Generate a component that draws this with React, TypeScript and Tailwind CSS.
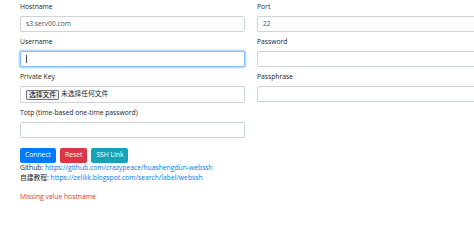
import React from "react";

const font = { fontFamily: '"Open Sans", "Noto Sans CJK SC", sans-serif' };

function Label({ children }: { children: React.ReactNode }) {
  return <div className="text-[6.75px] leading-[10px] text-[#212529] mb-[4px]">{children}</div>;
}

function Input({ value, focused }: { value?: string; focused?: boolean }) {
  return (
    <div
      className={
        "h-[16px] rounded-[2px] border bg-white flex items-center px-[5px] text-[6.75px] text-[#495057] " +
        (focused
          ? "border-[#80bdff] shadow-[0_0_0_1.5px_rgba(0,123,255,0.25)]"
          : "border-[#ced4da]")
      }
    >
      {focused ? <span className="w-px h-[8px] bg-[#495057]" /> : value}
    </div>
  );
}

export default function App() {
  return (
    <div className="w-[474px] h-[246px] bg-white overflow-hidden" style={font}>
      <div className="pl-[20px] pt-[2px]">
        <div className="grid grid-cols-[225px_225px] gap-x-[12px]">
          <div className="mb-[5px]">
            <Label>Hostname</Label>
            <Input value="s3.serv00.com" />
          </div>
          <div className="mb-[5px]">
            <Label>Port</Label>
            <Input value="22" />
          </div>
          <div className="mb-[5px]">
            <Label>Username</Label>
            <Input focused />
          </div>
          <div className="mb-[5px]">
            <Label>Password</Label>
            <Input />
          </div>
          <div className="mb-[5px]">
            <Label>Private Key</Label>
            <div className="h-[17px] rounded-[2px] border border-[#ced4da] bg-white flex items-center px-[5px] text-[6.75px] text-[#212529]">
              <span className="border border-[#767676] bg-[#efefef] rounded-[1px] px-[2px] h-[10px] leading-[8px] flex items-center mr-[2px] text-black">
                选择文件
              </span>
              <span className="text-[#212529]">未选择任何文件</span>
            </div>
          </div>
          <div className="mb-[5px]">
            <Label>Passphrase</Label>
            <Input />
          </div>
          <div className="mb-[5px]">
            <Label>Totp (time-based one-time password)</Label>
            <Input />
          </div>
          <div />
        </div>
        <div className="flex gap-[4px] mt-[5px]">
          <div className="h-[15px] px-[5px] rounded-[2px] bg-[#007bff] text-white text-[6.75px] flex items-center">Connect</div>
          <div className="h-[15px] px-[5px] rounded-[2px] bg-[#dc3545] text-white text-[6.75px] flex items-center">Reset</div>
          <div className="h-[15px] px-[5px] rounded-[2px] bg-[#17a2b8] text-white text-[6.75px] flex items-center">SSH Link</div>
        </div>
        <div className="text-[6.75px] leading-[10px] text-[#212529]">
          Github: <span className="text-[#007bff]">https://github.com/crazypeace/huashengdun-webssh</span>
        </div>
        <div className="text-[6.75px] leading-[10px] text-[#212529]">
          自建教程: <span className="text-[#007bff]">https://zelikk.blogspot.com/search/label/webssh</span>
        </div>
        <div className="text-[6.75px] leading-[10px] text-[#dc3545] mt-[9px]">Missing value hostname</div>
      </div>
    </div>
  );
}
